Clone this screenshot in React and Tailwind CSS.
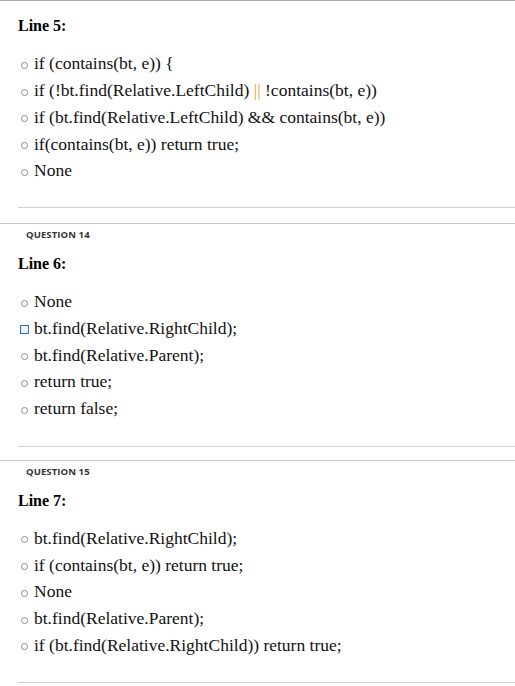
import React from "react";

const Radio = () => (
  <span className="inline-block w-[7px] h-[7px] rounded-full border border-[#8c8c8c] bg-white mt-[4px] ml-[3px] mr-[6px] shrink-0" />
);

const Check = () => (
  <span className="inline-block w-[9px] h-[9px] border border-[#2a72c8] bg-[#eef3f9] mt-[4px] ml-[2px] mr-[5px] shrink-0" />
);

function Option({ children, checked }) {
  return (
    <div className="flex items-center h-[26.75px] whitespace-nowrap">
      {checked ? <Check /> : <Radio />}
      <span>{children}</span>
    </div>
  );
}

function Block({ label, heading, options, first, topColor }) {
  return (
    <div className={`border-t ${topColor}`}>
      {label ? (
        <div
          className="h-[21px] leading-[22px] pl-[26px] text-[9.5px] font-bold text-[#333] tracking-[0.1px]"
          style={{ fontFamily: '"Open Sans", sans-serif' }}
        >
          {label}
        </div>
      ) : null}
      <div className="pl-[18px]">
        <div
          className={`${first ? "mt-[15px]" : "mt-[9px]"} h-[20px] leading-[20px] text-[16px] font-bold text-black`}
          style={{ fontFamily: '"Liberation Serif", serif' }}
        >
          {heading}
        </div>
        <div
          className="mt-[14px] text-[17.5px] text-[#111]"
          style={{ fontFamily: '"Liberation Serif", serif' }}
        >
          {options.map((o, i) => (
            <Option key={i} checked={o.checked}>
              {o.text}
            </Option>
          ))}
        </div>
        <div className={`${first ? "mt-[23px]" : "mt-[24px]"} border-b border-[#d2d2d2]`} />
      </div>
      <div className={first ? "h-[15px]" : "h-[13px]"} />
    </div>
  );
}

export default function App() {
  return (
    <div className="w-[515px] h-[686px] bg-white overflow-hidden">
      <Block
        first
        topColor="border-[#a8a8a8]"
        heading="Line 5:"
        options={[
          { text: "if (contains(bt, e)) {" },
          {
            text: (
              <>
                if (!bt.find(Relative.LeftChild){" "}
                <span className="text-[#eb9a3a]">||</span> !contains(bt, e))
              </>
            ),
          },
          { text: "if (bt.find(Relative.LeftChild) && contains(bt, e))" },
          { text: "if(contains(bt, e)) return true;" },
          { text: "None" },
        ]}
      />
      <Block
        topColor="border-[#c8c8c8]"
        label="QUESTION 14"
        heading="Line 6:"
        options={[
          { text: "None" },
          { text: "bt.find(Relative.RightChild);", checked: true },
          { text: "bt.find(Relative.Parent);" },
          { text: "return true;" },
          { text: "return false;" },
        ]}
      />
      <Block
        topColor="border-[#c8c8c8]"
        label="QUESTION 15"
        heading="Line 7:"
        options={[
          { text: "bt.find(Relative.RightChild);" },
          { text: "if (contains(bt, e)) return true;" },
          { text: "None" },
          { text: "bt.find(Relative.Parent);" },
          { text: "if (bt.find(Relative.RightChild)) return true;" },
        ]}
      />
    </div>
  );
}
